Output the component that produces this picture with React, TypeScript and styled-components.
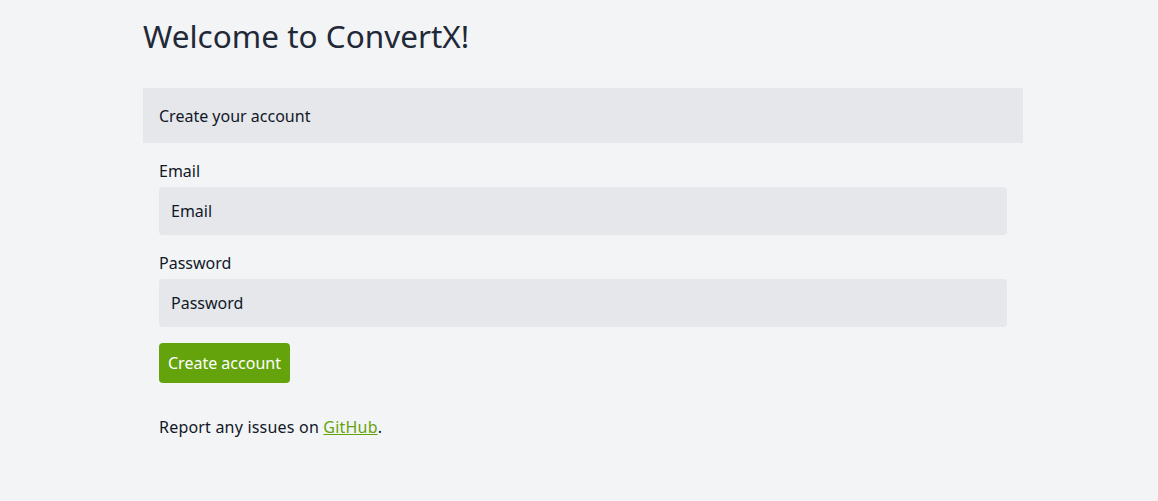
import styled, { createGlobalStyle } from "styled-components";

const GlobalStyle = createGlobalStyle`
  html, body {
    margin: 0;
    padding: 0;
    background: #f3f4f6;
    color: #111827;
    font-family: "Noto Sans", "Open Sans", sans-serif;
  }
  * {
    box-sizing: border-box;
  }
`;

const Page = styled.main`
  width: 880px;
  margin-left: 143px;
  padding-top: 14px;
`;

const Title = styled.h1`
  margin: 0 0 30px;
  font-size: 31.5px;
  font-weight: 400;
  line-height: 44px;
  color: #1f2937;
`;

const Card = styled.section`
  display: flex;
  flex-direction: column;
`;

const CardHeader = styled.header`
  height: 55px;
  display: flex;
  align-items: center;
  padding: 0 16px;
  background: #e5e7eb;
  font-size: 16px;
`;

const Form = styled.form`
  display: flex;
  flex-direction: column;
  padding: 16px 16px 0;
`;

const Field = styled.label`
  display: flex;
  flex-direction: column;
  gap: 4px;
  margin-bottom: 16px;
  font-size: 16px;
  line-height: 24px;
`;

const Input = styled.input`
  height: 48px;
  padding: 0 12px;
  border: none;
  border-radius: 4px;
  background: #e5e7eb;
  font: inherit;
  color: #111827;
  outline: none;

  &::placeholder {
    color: #111827;
  }
`;

const SubmitButton = styled.button`
  align-self: flex-start;
  height: 40px;
  padding: 0 9px;
  border: none;
  border-radius: 4px;
  background: #65a30d;
  color: #ffffff;
  font: inherit;
  font-size: 16px;
  cursor: pointer;
`;

const Footer = styled.p`
  margin: 32px 0 0;
  padding: 0 16px;
  font-size: 16px;
  line-height: 24px;
  letter-spacing: 0.2px;
`;

const Link = styled.a`
  color: #65a30d;
  text-decoration: underline;
`;

export default function App() {
  return (
    <>
      <GlobalStyle />
      <Page>
        <Title>Welcome to ConvertX!</Title>
        <Card>
          <CardHeader>Create your account</CardHeader>
          <Form onSubmit={(e) => e.preventDefault()}>
            <Field>
              Email
              <Input type="email" placeholder="Email" />
            </Field>
            <Field>
              Password
              <Input type="password" placeholder="Password" />
            </Field>
            <SubmitButton type="submit">Create account</SubmitButton>
          </Form>
        </Card>
        <Footer>
          Report any issues on <Link href="#">GitHub</Link>.
        </Footer>
      </Page>
    </>
  );
}
